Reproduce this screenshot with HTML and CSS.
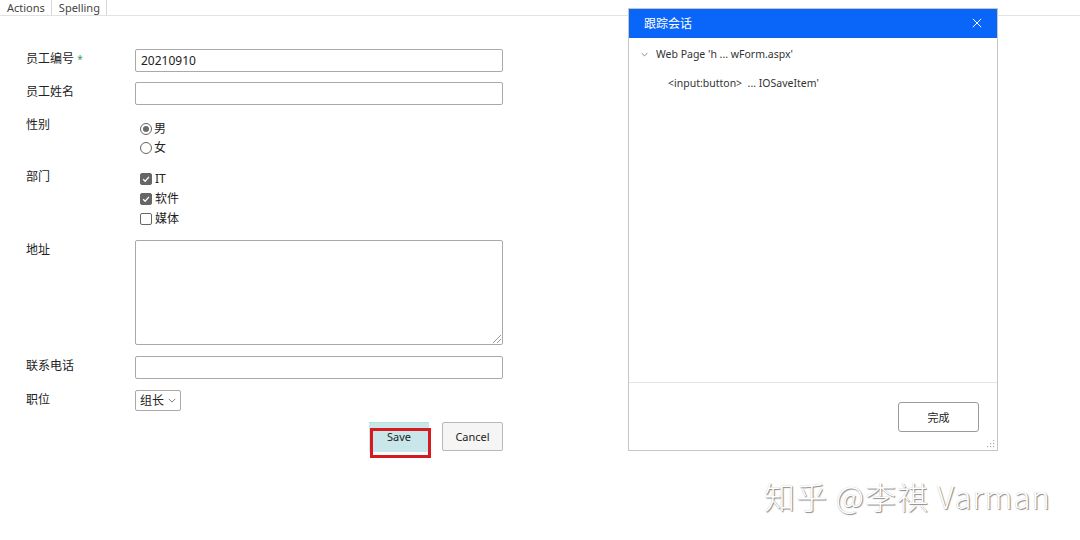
FILE: index.html
```html
<!DOCTYPE html>
<html lang="zh-CN">

<head>
  <meta charset="UTF-8">
  <title>员工信息</title>
  <link rel="stylesheet" href="styles.css">
</head>

<body>
  <div class="tabbar">
    <span class="tab">Actions</span>
    <span class="tab">Spelling</span>
  </div>

  <div class="form">
    <div class="row">
      <label class="label">员工编号 <span class="req">*</span></label>
      <div class="input">20210910</div>
    </div>
    <div class="row">
      <label class="label">员工姓名</label>
      <div class="input"></div>
    </div>
    <div class="row">
      <label class="label">性别</label>
      <div class="options radios">
        <div class="option"><span class="radio checked"></span>男</div>
        <div class="option"><span class="radio"></span>女</div>
      </div>
    </div>
    <div class="row">
      <label class="label">部门</label>
      <div class="options checks">
        <div class="option"><span class="check checked"><svg viewBox="0 0 12 12"><path d="M2.6 6.2 L5 8.6 L9.6 3.4" /></svg></span>IT</div>
        <div class="option"><span class="check checked"><svg viewBox="0 0 12 12"><path d="M2.6 6.2 L5 8.6 L9.6 3.4" /></svg></span>软件</div>
        <div class="option"><span class="check"></span>媒体</div>
      </div>
    </div>
    <div class="row shift">
      <label class="label">地址</label>
      <div class="textarea"><span class="grip"></span></div>
    </div>
    <div class="row shift">
      <label class="label">联系电话</label>
      <div class="input"></div>
    </div>
    <div class="row shift">
      <label class="label">职位</label>
      <div class="select">组长 <svg class="caret" viewBox="0 0 10 6"><path d="M1 1 L5 5 L9 1" /></svg></div>
    </div>
    <div class="actions">
      <div class="btn-wrap">
        <button class="btn save">Save</button>
        <span class="highlight"></span>
      </div>
      <button class="btn cancel">Cancel</button>
    </div>
  </div>

  <!-- floating dialog -->
  <div class="dialog">
    <div class="dialog-head">
      <span>跟踪会话</span>
      <svg class="close" viewBox="0 0 12 12"><path d="M1 1 L11 11 M11 1 L1 11" /></svg>
    </div>
    <div class="dialog-body">
      <div class="tree-item">
        <svg class="chev" viewBox="0 0 10 6"><path d="M1 1 L5 5 L9 1" /></svg>
        Web Page 'h ... wForm.aspx'
      </div>
      <div class="tree-child">&lt;input:button&gt;&nbsp; ... IOSaveItem'</div>
    </div>
    <div class="dialog-foot">
      <button class="btn done">完成</button>
      <svg class="resize" viewBox="0 0 10 10">
        <rect x="8" y="2" width="1.2" height="1.2" />
        <rect x="5" y="5" width="1.2" height="1.2" />
        <rect x="8" y="5" width="1.2" height="1.2" />
        <rect x="2" y="8" width="1.2" height="1.2" />
        <rect x="5" y="8" width="1.2" height="1.2" />
        <rect x="8" y="8" width="1.2" height="1.2" />
      </svg>
    </div>
  </div>

  <div class="watermark">知乎 @李祺 Varman</div>
</body>

</html>
```

FILE: styles.css
```css
body {
  margin: 0;
  width: 1080px;
  height: 540px;
  background: #fff;
  color: #222;
  font-family: "Noto Sans", "Noto Sans CJK SC", sans-serif;
  font-size: 12px;
  position: relative;
  overflow: hidden;
}

.tabbar {
  height: 15px;
  border-bottom: 1px solid #e2e2e2;
  display: flex;
}

.tab {
  padding: 0 6px 0 7px;
  font-size: 11px;
  line-height: 15px;
  color: #444;
  border-right: 1px solid #d6d6d6;
}

.form {
  padding: 33px 0 0 26px;
  width: 477px;
  display: flex;
  flex-direction: column;
  gap: 10px;
}

.row {
  display: flex;
  align-items: flex-start;
}

.row.shift {
  margin-top: 1px;
}

.label {
  width: 109px;
  flex-shrink: 0;
  line-height: 18px;
  padding-top: 1px;
  color: #222;
}

.req {
  color: #3a9a6a;
  font-size: 10px;
  vertical-align: top;
}

.input {
  width: 368px;
  height: 23px;
  box-sizing: border-box;
  border: 1px solid #a9a9a9;
  border-radius: 2px;
  padding: 0 5px;
  line-height: 21px;
  font-size: 12px;
}

.textarea {
  width: 368px;
  height: 105px;
  box-sizing: border-box;
  border: 1px solid #a9a9a9;
  border-radius: 2px;
  position: relative;
}

.grip {
  position: absolute;
  right: 1px;
  bottom: 1px;
  width: 8px;
  height: 8px;
  background: linear-gradient(135deg, transparent 45%, #999 46%, #999 52%, transparent 53%, transparent 70%, #999 71%, #999 77%, transparent 78%);
}

.options {
  padding-left: 5px;
}

.radios {
  padding-top: 4px;
}

.checks {
  padding-top: 2px;
}

.radios .option {
  line-height: 19px;
}

.checks .option {
  line-height: 20px;
}

.option {
  display: flex;
  align-items: center;
  font-size: 12px;
}

.radio {
  width: 12px;
  height: 12px;
  box-sizing: border-box;
  border: 1px solid #666;
  border-radius: 50%;
  margin-right: 2px;
  position: relative;
}

.radio.checked::after {
  content: "";
  position: absolute;
  left: 2px;
  top: 2px;
  width: 6px;
  height: 6px;
  border-radius: 50%;
  background: #6a6a6a;
}

.check {
  width: 12px;
  height: 12px;
  box-sizing: border-box;
  border: 1px solid #666;
  border-radius: 2px;
  margin-right: 3px;
  display: flex;
  align-items: center;
  justify-content: center;
}

.check.checked {
  background: #666;
}

.check svg {
  width: 10px;
  height: 10px;
  fill: none;
  stroke: #fff;
  stroke-width: 1.6;
}

.select {
  height: 21px;
  box-sizing: border-box;
  border: 1px solid #a9a9a9;
  border-radius: 2px;
  padding: 0 4px 0 4px;
  line-height: 19px;
  display: flex;
  align-items: center;
  gap: 4px;
}

.caret {
  width: 8px;
  height: 5px;
  fill: none;
  stroke: #555;
  stroke-width: 1;
}

.actions {
  display: flex;
  justify-content: flex-end;
  gap: 13px;
  margin-top: 1px;
}

.btn {
  font-family: "Noto Sans", "Noto Sans CJK SC", sans-serif;
  font-size: 11px;
  color: #222;
  cursor: pointer;
}

.btn-wrap {
  position: relative;
}

.save {
  width: 60px;
  height: 30px;
  border: none;
  border-top: 1px solid #b9dfe3;
  background: #c9e7ea;
  padding: 0 0 2px;
}

.highlight {
  position: absolute;
  left: 1px;
  top: 6px;
  width: 61px;
  height: 30px;
  box-sizing: border-box;
  border: 3px solid #d51a20;
}

.cancel {
  width: 61px;
  height: 29px;
  background: #f5f5f5;
  border: 1px solid #b8b8b8;
  border-radius: 2px;
}

.dialog {
  position: absolute;
  left: 628px;
  top: 8px;
  width: 370px;
  height: 443px;
  box-sizing: border-box;
  border: 1px solid #c6c6c6;
  background: #fff;
  display: flex;
  flex-direction: column;
}

.dialog-head {
  height: 29px;
  background: #0a66f8;
  color: #fff;
  display: flex;
  align-items: center;
  justify-content: space-between;
  padding: 0 15px 2px 15px;
  box-sizing: border-box;
  font-size: 12px;
  flex-shrink: 0;
}

.close {
  width: 10px;
  height: 10px;
  fill: none;
  stroke: #fff;
  stroke-width: 1.2;
}

.dialog-body {
  flex: 1;
  border-bottom: 1px solid #e4e4e4;
  padding-top: 7px;
  font-size: 10.5px;
  color: #333;
}

.tree-item {
  display: flex;
  align-items: center;
  height: 18px;
  padding-left: 12px;
}

.chev {
  width: 7px;
  height: 5px;
  fill: none;
  stroke: #555;
  stroke-width: 1;
  margin-right: 8px;
}

.tree-child {
  padding-left: 39px;
  margin-top: 11px;
  line-height: 18px;
}

.dialog-foot {
  height: 67px;
  flex-shrink: 0;
  display: flex;
  justify-content: flex-end;
  align-items: flex-start;
  padding: 19px 18px 0 0;
  box-sizing: border-box;
  position: relative;
}

.done {
  width: 81px;
  height: 30px;
  background: #fff;
  border: 1px solid #9a9a9a;
  border-radius: 3px;
  font-size: 11px;
}

.resize {
  position: absolute;
  right: 2px;
  bottom: 2px;
  width: 10px;
  height: 10px;
  fill: #b0b0b0;
}

.watermark {
  position: absolute;
  left: 764px;
  top: 473px;
  font-family: "Noto Sans CJK SC", "Noto Sans", sans-serif;
  font-size: 31px;
  font-weight: 300;
  color: #fff;
  letter-spacing: 1px;
  text-shadow: 1px 1px 1px rgba(0, 0, 0, 0.45), 0 0 1px rgba(0, 0, 0, 0.25);
}
```
